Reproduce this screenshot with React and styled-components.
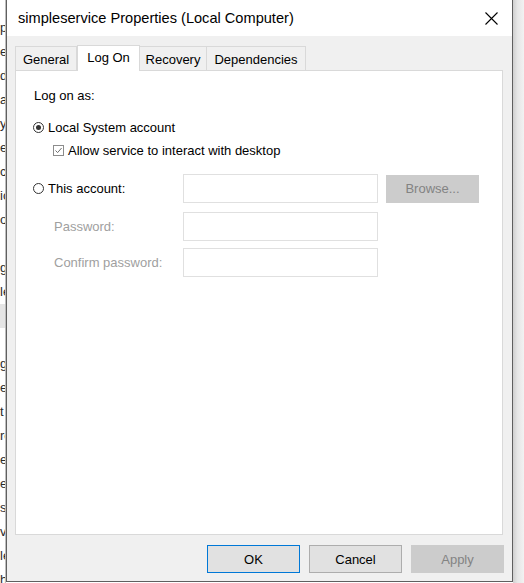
import React from 'react'
import styled, { createGlobalStyle } from 'styled-components'

const GlobalStyle = createGlobalStyle`
    html, body {
        margin : 0;
        padding : 0;
        background : #ffffff;
    }
    body {
        font-family : "Liberation Sans", Arial, sans-serif;
        font-size : 13px;
        color : #000000;
    }
`

const Page = styled.div`
    display : flex;
    flex-direction : row;
    width : 524px;
    height : 583px;
    overflow : hidden;
    background : #ffffff;
`

const BehindStrip = styled.div`
    width : 5px;
    flex-shrink : 0;
    padding-top : 16px;
    overflow : hidden;
    background : #ffffff;
    border-right : 1px solid #bdbdbd;
`

const BehindRow = styled.div`
    height : 24px;
    line-height : 24px;
    white-space : nowrap;
    color : #2b2b2b;
    background : ${p => p.selected ? '#e5e5e5' : 'transparent'};
`

const Window = styled.div`
    display : flex;
    flex-direction : column;
    width : 505px;
    height : 581px;
    flex-shrink : 0;
    background : #f0f0f0;
    border : 1px solid #5f5f5f;
    border-top : none;
`

const TitleBar = styled.div`
    display : flex;
    align-items : center;
    justify-content : space-between;
    height : 36px;
    padding : 0 14px 0 11px;
    background : #ffffff;
    font-size : 14.6px;
    color : #000000;
`

const Shadow = styled.div`
    flex : 1;
    background : linear-gradient(to right, #cfcfcf, #e6e6e6 40%, #f2f2f2);
`

const Body = styled.div`
    display : flex;
    flex-direction : column;
    padding : 10px 8px 0 8px;
`

const TabStrip = styled.div`
    display : flex;
    align-items : flex-end;
    height : 24px;
    padding-left : 1px;
`

const Tab = styled.div`
    display : flex;
    align-items : center;
    justify-content : center;
    box-sizing : border-box;
    width : ${p => p.w}px;
    height : ${p => p.active ? 26 : 24}px;
    margin-bottom : ${p => p.active ? -1 : 0}px;
    padding-top : ${p => p.active ? 0 : 2}px;
    padding-bottom : ${p => p.active ? 3 : 0}px;
    background : ${p => p.active ? '#ffffff' : '#f0f0f0'};
    border : 1px solid #d9d9d9;
    border-bottom : none;
    margin-left : ${p => p.active ? 0 : -1}px;
    position : relative;
    z-index : ${p => p.active ? 1 : 0};
`

const Panel = styled.div`
    box-sizing : border-box;
    width : 488px;
    height : 465px;
    padding : 17px 0 0 17px;
    background : #ffffff;
    border : 1px solid #d9d9d9;
`

const Heading = styled.div`
    height : 16px;
    line-height : 16px;
    margin-left : 1px;
`

const OptionRow = styled.div`
    display : flex;
    align-items : center;
    height : ${p => p.h || 16}px;
    margin-top : ${p => p.top}px;
    margin-left : ${p => p.indent || 0}px;
    gap : ${p => p.gap || 0}px;
`

const Radio = styled.span`
    box-sizing : border-box;
    display : inline-flex;
    align-items : center;
    justify-content : center;
    width : 11px;
    height : 11px;
    border : 1px solid #333333;
    border-radius : 50%;
    &::after {
        content : '';
        display : ${p => p.checked ? 'block' : 'none'};
        width : 5px;
        height : 5px;
        border-radius : 50%;
        background : #333333;
    }
`

const Check = styled.span`
    box-sizing : border-box;
    display : inline-flex;
    align-items : center;
    justify-content : center;
    width : 11px;
    height : 11px;
    border : 1px solid #8c8c8c;
    background : #ffffff;
`

const FieldLabel = styled.div`
    width : ${p => p.w}px;
    flex-shrink : 0;
    padding-left : ${p => p.indent || 0}px;
    box-sizing : border-box;
    display : flex;
    align-items : center;
    gap : 4px;
    color : ${p => p.disabled ? '#a0a0a0' : '#000000'};
`

const TextBox = styled.div`
    box-sizing : border-box;
    width : 195px;
    height : 29px;
    background : #ffffff;
    border : 1px solid #e0e0e0;
`

const DialogButton = styled.div`
    box-sizing : border-box;
    display : flex;
    align-items : center;
    justify-content : center;
    width : 93px;
    height : 28px;
    background : ${p => p.disabled ? '#cccccc' : '#e1e1e1'};
    border : 1px solid ${p => p.primary ? '#0078d7' : p.disabled ? '#cccccc' : '#adadad'};
    color : ${p => p.disabled ? '#838383' : '#000000'};
    margin-left : ${p => p.left || 0}px;
`

const ButtonBar = styled.div`
    display : flex;
    justify-content : flex-end;
    gap : 9px;
    margin-top : 10px;
`

const behind = ['p', 'es', 'de', 'a', 'yg', 'er', 'c', 'ic', 'or', '', 'g', 'le', '', '', 'g', 'es', 't', 're', 'es', 'er', 's', 've', 'le', 'h']

const CloseIcon = () => (
    <svg width="13" height="13" viewBox="0 0 13 13">
        <path d="M0.5 0.5 L12.5 12.5 M12.5 0.5 L0.5 12.5" stroke="#000" strokeWidth="1.1" fill="none" />
    </svg>
)

const CheckMark = () => (
    <svg width="9" height="9" viewBox="0 0 9 9">
        <path d="M1.5 4.5 L3.6 6.6 L7.6 2" stroke="#6e6e6e" strokeWidth="1" fill="none" />
    </svg>
)

const App = () => {
    return <Page>
        <GlobalStyle />
        <BehindStrip>
            {behind.map((t, i) => <BehindRow key={i} selected={i === 12}>{t}</BehindRow>)}
        </BehindStrip>
        <Window>
            <TitleBar>
                <span>simpleservice Properties (Local Computer)</span>
                <CloseIcon />
            </TitleBar>
            <Body>
                <TabStrip>
                    <Tab w={62}>General</Tab>
                    <Tab w={63} active>Log On</Tab>
                    <Tab w={68}>Recovery</Tab>
                    <Tab w={100}>Dependencies</Tab>
                </TabStrip>
                <Panel>
                    <Heading>Log on as:</Heading>
                    <OptionRow top={15} gap={4}>
                        <Radio checked />
                        <span>Local System account</span>
                    </OptionRow>
                    <OptionRow top={7} indent={20} gap={4}>
                        <Check><CheckMark /></Check>
                        <span>Allow service to interact with desktop</span>
                    </OptionRow>
                    <OptionRow top={16} h={29}>
                        <FieldLabel w={150}>
                            <Radio />
                            <span>This account:</span>
                        </FieldLabel>
                        <TextBox />
                        <DialogButton disabled left={8}>Browse...</DialogButton>
                    </OptionRow>
                    <OptionRow top={9} h={29}>
                        <FieldLabel w={150} indent={21} disabled>Password:</FieldLabel>
                        <TextBox />
                    </OptionRow>
                    <OptionRow top={7} h={29}>
                        <FieldLabel w={150} indent={21} disabled>Confirm password:</FieldLabel>
                        <TextBox />
                    </OptionRow>
                </Panel>
                <ButtonBar>
                    <DialogButton primary>OK</DialogButton>
                    <DialogButton>Cancel</DialogButton>
                    <DialogButton disabled>Apply</DialogButton>
                </ButtonBar>
            </Body>
        </Window>
        <Shadow />
    </Page>
}

export default App
